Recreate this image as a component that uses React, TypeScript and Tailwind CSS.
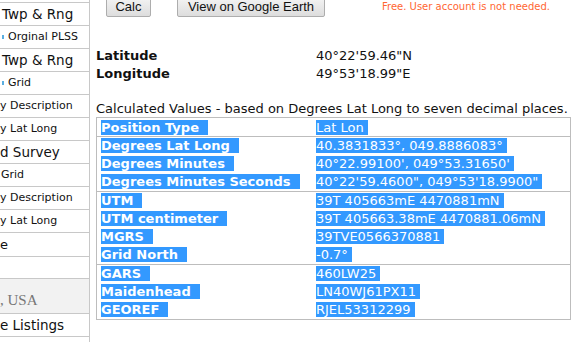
import React from 'react';

const sideRows: { h: string; text: string; cls: string; dot?: boolean; bg?: string }[] = [
  { h: 'h-[23px]', text: '', cls: '' },
  { h: 'h-[23px]', text: 'Twp & Rng', cls: 'text-[13.5px] pl-[2px]' },
  { h: 'h-[23px]', text: 'Orginal PLSS', cls: 'text-[11px] pl-[2px]', dot: true },
  { h: 'h-[23px]', text: 'Twp & Rng', cls: 'text-[13.5px] pl-[2px]' },
  { h: 'h-[23px]', text: 'Grid', cls: 'text-[11px] pl-[2px]', dot: true },
  { h: 'h-[23px]', text: 'y Description', cls: 'text-[11px]' },
  { h: 'h-[23px]', text: 'y Lat Long', cls: 'text-[11px]' },
  { h: 'h-[23px]', text: 'd Survey', cls: 'text-[13.5px]' },
  { h: 'h-[23px]', text: 'Grid', cls: 'text-[11px] pl-[1px]' },
  { h: 'h-[23px]', text: 'y Description', cls: 'text-[11px]' },
  { h: 'h-[23px]', text: 'y Lat Long', cls: 'text-[11px]' },
  { h: 'h-[24px]', text: 'e', cls: 'text-[13px]' },
  { h: 'h-[22px]', text: '', cls: '' },
  { h: 'h-[35px]', text: ', USA', cls: 'font-["Liberation_Serif",serif] text-[15px] text-[#777] items-end pb-[2px]', bg: 'bg-[#f2f2f2]' },
  { h: 'h-[23px]', text: 'e Listings', cls: 'text-[13.5px]' },
  { h: 'h-[23px]', text: '', cls: '' },
];

const sections: [string, string][][] = [
  [
    ['Degrees Lat Long', '40.3831833°, 049.8886083°'],
    ['Degrees Minutes', "40°22.99100', 049°53.31650'"],
    ['Degrees Minutes Seconds', '40°22\'59.4600", 049°53\'18.9900"'],
  ],
  [
    ['UTM', '39T 405663mE 4470881mN'],
    ['UTM centimeter', '39T 405663.38mE 4470881.06mN'],
    ['MGRS', '39TVE0566370881'],
    ['Grid North', '-0.7°'],
  ],
  [
    ['GARS', '460LW25'],
    ['Maidenhead', 'LN40WJ61PX11'],
    ['GEOREF', 'RJEL53312299'],
  ],
];

function Row({ label, value }: { label: string; value: string }) {
  return (
    <div className="grid grid-cols-[219px_1fr] h-[16px] leading-[16px] whitespace-pre">
      <div className="pl-[4px]">
        <span className="bg-[#3399ff] text-white font-bold">{label + '  '}</span>
      </div>
      <div>
        <span className="bg-[#3399ff] text-white">{value + ' '}</span>
      </div>
    </div>
  );
}

export default function App() {
  return (
    <div className="w-[586px] h-[342px] overflow-hidden bg-white flex font-['DejaVu_Sans',Verdana,sans-serif] text-[#111]">
      <div className="w-[90px] shrink-0 border-r border-[#c8c8c8] flex flex-col mt-[-20px]">
        {sideRows.map((r, i) => (
          <div key={i} className={`${r.h} shrink-0 ${r.bg ?? ''} border-b border-[#c8c8c8] flex items-center whitespace-nowrap overflow-hidden ${r.cls}`}>
            {r.dot && <span className="w-[2px] h-[4px] bg-[#5aaee0] mr-[4px]" />}
            {r.text}
          </div>
        ))}
      </div>

      <div className="flex-1 pl-[6px] flex flex-col">
        <div className="flex items-start mt-[-5px] h-[22px] shrink-0">
          <button className="ml-[10px] w-[45px] h-[22px] border border-[#adadad] rounded-[2px] bg-gradient-to-b from-[#f6f6f6] to-[#dddddd] font-['Liberation_Sans',Arial,sans-serif] text-[13px] text-[#111] pt-[1px]">
            Calc
          </button>
          <button className="ml-[26px] w-[148px] h-[22px] border border-[#adadad] rounded-[2px] bg-gradient-to-b from-[#f6f6f6] to-[#dddddd] font-['Liberation_Sans',Arial,sans-serif] text-[13px] text-[#111] pt-[1px]">
            View on Google Earth
          </button>
          <span className="ml-[57px] mt-[5px] text-[10px] leading-[13px] text-[#ff6633] whitespace-nowrap">
            Free. User account is not needed.
          </span>
        </div>

        <div className="mt-[30px] text-[13px] leading-[18px]">
          <div className="grid grid-cols-[220px_1fr]">
            <span className="font-bold">Latitude</span>
            <span>40°22'59.46"N</span>
          </div>
          <div className="grid grid-cols-[220px_1fr]">
            <span className="font-bold">Longitude</span>
            <span>49°53'18.99"E</span>
          </div>
        </div>

        <div className="mt-[18px] text-[13px] leading-[16px] whitespace-nowrap">
          Calculated Values - based on Degrees Lat Long to seven decimal places.
        </div>

        <div className="w-[475px] border border-[#bdbdbd] text-[13px]">
          <div className="pt-[2px]">
            <Row label="Position Type" value="Lat Lon" />
          </div>
          {sections.map((sec, i) => (
            <div key={i} className="border-t border-[#bdbdbd] pt-[1px] pb-[1px] flex flex-col gap-[2px]">
              {sec.map(([l, v]) => (
                <Row key={l} label={l} value={v} />
              ))}
            </div>
          ))}
        </div>
      </div>
    </div>
  );
}
